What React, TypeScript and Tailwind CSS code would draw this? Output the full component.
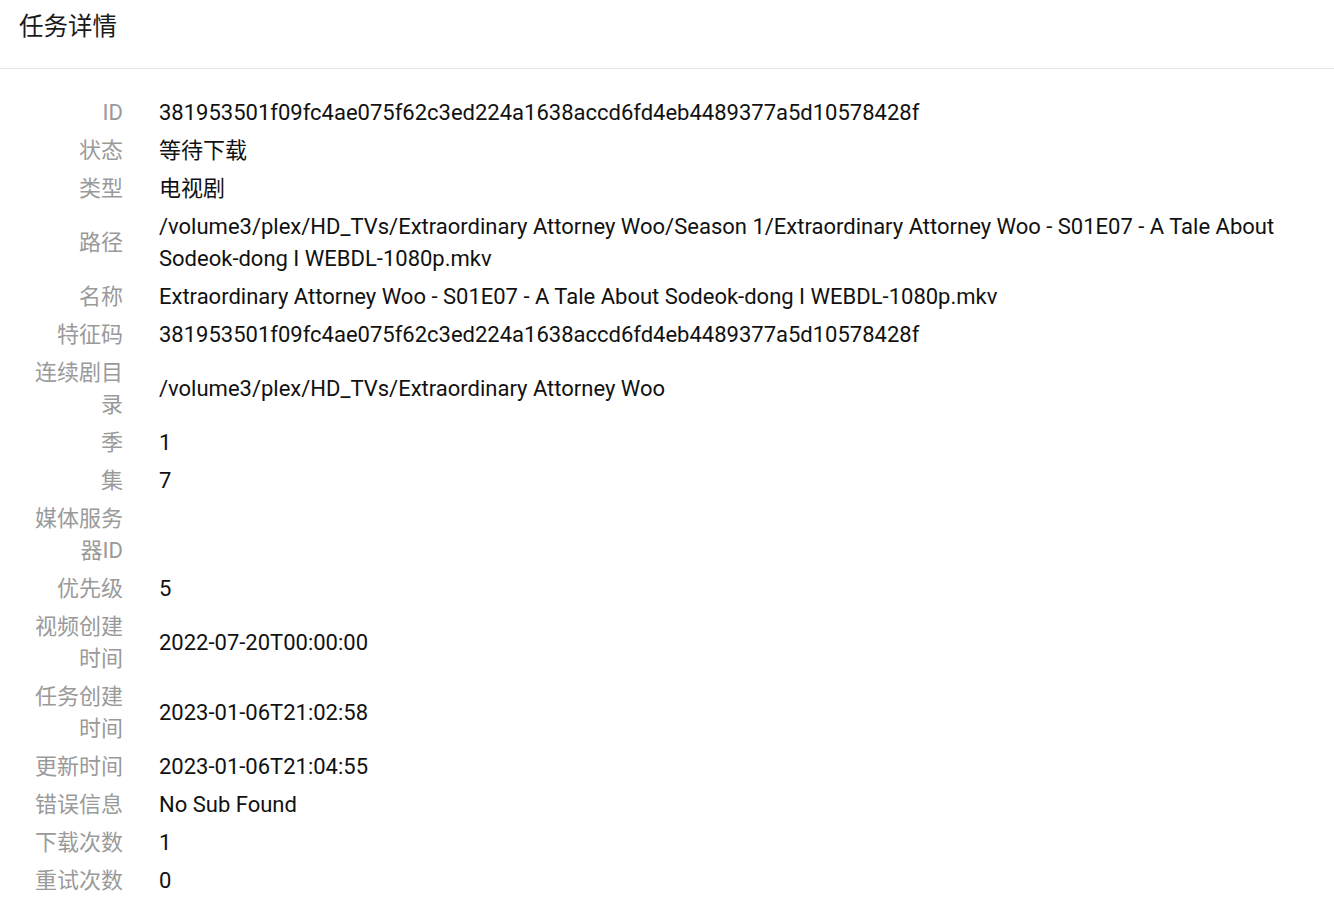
import React from "react";

const rows: { label: string; value: string }[] = [
  { label: "ID", value: "381953501f09fc4ae075f62c3ed224a1638accd6fd4eb4489377a5d10578428f" },
  { label: "状态", value: "等待下载" },
  { label: "类型", value: "电视剧" },
  {
    label: "路径",
    value:
      "/volume3/plex/HD_TVs/Extraordinary Attorney Woo/Season 1/Extraordinary Attorney Woo - S01E07 - A Tale About Sodeok-dong I WEBDL-1080p.mkv",
  },
  { label: "名称", value: "Extraordinary Attorney Woo - S01E07 - A Tale About Sodeok-dong I WEBDL-1080p.mkv" },
  { label: "特征码", value: "381953501f09fc4ae075f62c3ed224a1638accd6fd4eb4489377a5d10578428f" },
  { label: "连续剧目录", value: "/volume3/plex/HD_TVs/Extraordinary Attorney Woo" },
  { label: "季", value: "1" },
  { label: "集", value: "7" },
  { label: "媒体服务器ID", value: "" },
  { label: "优先级", value: "5" },
  { label: "视频创建时间", value: "2022-07-20T00:00:00" },
  { label: "任务创建时间", value: "2023-01-06T21:02:58" },
  { label: "更新时间", value: "2023-01-06T21:04:55" },
  { label: "错误信息", value: "No Sub Found" },
  { label: "下载次数", value: "1" },
  { label: "重试次数", value: "0" },
];

export default function App() {
  return (
    <div
      className="min-h-screen bg-white"
      style={{ fontFamily: 'Roboto, "Noto Sans CJK SC", sans-serif' }}
    >
      <div className="h-[69px] border-b border-[#e3e3e3] pl-[19px] pt-[11px]">
        <div className="text-[24.5px] leading-[32px] text-[#1a1a1a]">任务详情</div>
      </div>
      <div className="pt-[25px] pl-[34px] pr-[20px]">
        {rows.map((r) => (
          <div key={r.label} className="flex items-center py-[3px]">
            <div className="w-[89px] shrink-0 text-right text-[22px] leading-[32px] text-[#9a9a9a] break-all">
              {r.label}
            </div>
            <div className="ml-[36px] min-h-[32px] flex-1 text-[22px] leading-[32px] text-[#111]">
              {r.value}
            </div>
          </div>
        ))}
      </div>
    </div>
  );
}
